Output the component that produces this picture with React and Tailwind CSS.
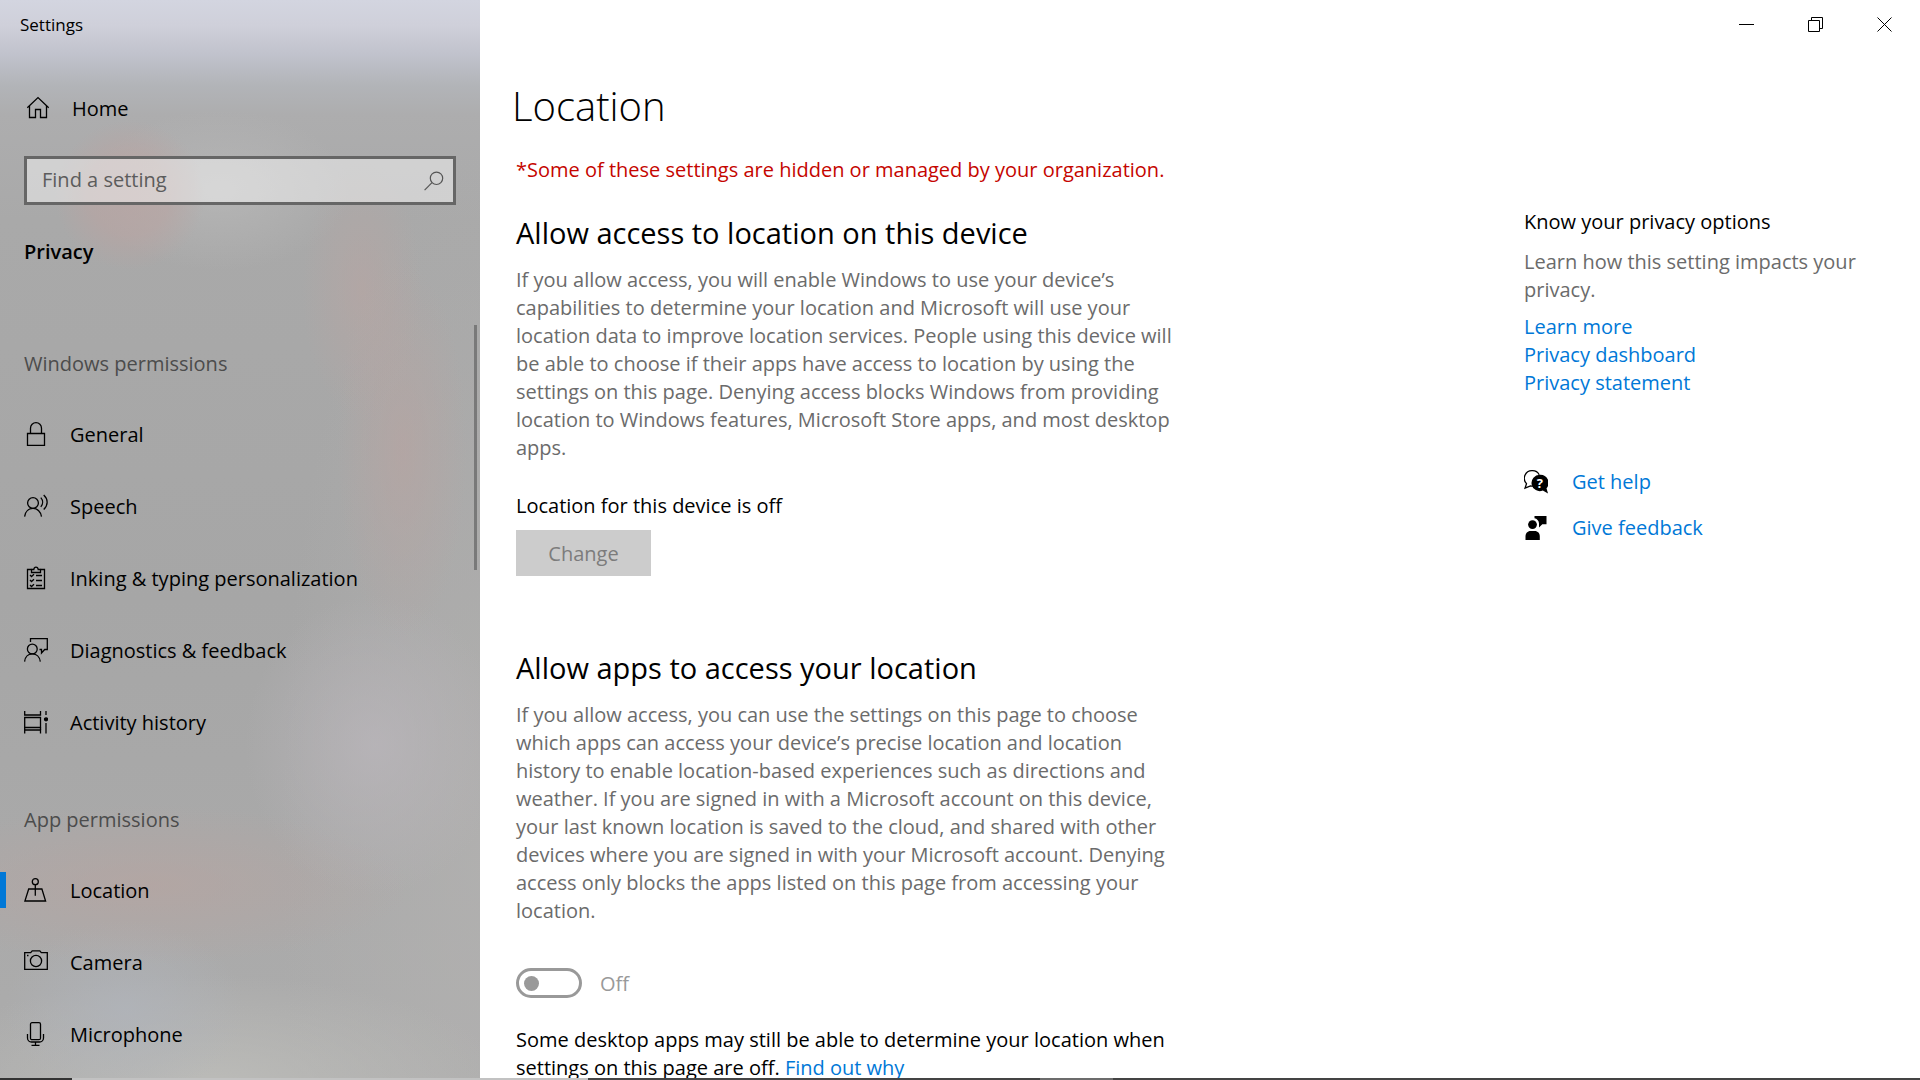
import React, { useState } from 'react';

const Icon = ({ children, className = '' }) => (
    <svg
        width="24"
        height="24"
        viewBox="0 0 24 24"
        fill="none"
        stroke="currentColor"
        strokeWidth="1.3"
        className={`shrink-0 ${className}`}
        aria-hidden="true"
    >
        {children}
    </svg>
);

const HomeIcon = () => (
    <Icon>
        <path d="M1.3 11.8 12 1.6l10.7 10.2" />
        <path d="M3.5 10v11.5h6v-8h5v8h6V10" />
    </Icon>
);

const LockIcon = () => (
    <Icon>
        <path d="M3.5 11.5h17v12h-17z" />
        <path d="M6.5 11.5V6.2a5.5 5.5 0 0 1 11 0v5.3" />
    </Icon>
);

const SpeechIcon = () => (
    <Icon>
        <circle cx="9" cy="9" r="5.4" />
        <path d="M.6 22.6c.6-4.9 4-8.2 8.4-8.2s7.9 3.3 8.5 8.2" />
        <path d="M16.8 3.6c2.4 2.7 2.4 6.6 0 9.3" />
        <path d="M19.7 1c4.6 4.2 4.6 10.3 0 14.5" />
    </Icon>
);

const ClipboardIcon = () => (
    <Icon>
        <path d="M7.5 3.5h-4v19h17v-19h-4" />
        <path d="M7.5 6.5v-3h2.3c.3-3.3 4.1-3.3 4.4 0h2.3v3z" />
        <path d="M12 9.5h6M12 14.5h6M12 19.500h6" />
        <path d="m6 9 1.500 1.500L10 8.200M6 14l1.500 1.500L10 13.200M6 19l1.500 1.500L10 18.200" />
    </Icon>
);

const DiagnosticsIcon = () => (
    <Icon>
        <circle cx="8.3" cy="11" r="4.9" />
        <path d="M.6 23.6c.5-4.6 3.6-7.7 7.7-7.7s7.4 3.1 8 7.7" />
        <path d="M6.5 4V.7h16.800v10.800h-2.600L17.500 15v-3.500h-2" />
    </Icon>
);

const HistoryIcon = () => (
    <Icon>
        <path d="M.7 1v4h15.800V1M.7 7.500h15.800v10H.7zM.7 23.500V20h15.800v3.500" />
        <path d="M.7 17.500V20M16.500 17.500V20M22 1v4M22 13v10.500" />
        <circle cx="22" cy="9.300" r="1.500" fill="currentColor" />
    </Icon>
);

const LocationIcon = () => (
    <Icon>
        <circle cx="11.3" cy="3.7" r="3" />
        <path d="M11.300 6.700v11" />
        <path d="M4.700 11h13.200l3.700 12H.9z" />
    </Icon>
);

const CameraIcon = () => (
    <Icon>
        <path d="M.7 2.600h6l1.500-1.700h7.600l1.500 1.700h6v16.800H.7z" />
        <circle cx="12" cy="11" r="5.600" />
        <path d="M3 5.500h1.500" />
    </Icon>
);

const MicrophoneIcon = () => (
    <Icon>
        <rect x="6.500" y=".7" width="10" height="17" rx="1.500" />
        <path d="M3.500 12v4a4 4 0 0 0 4 4h8a4 4 0 0 0 4-4v-4M11.500 20v3.300M7.500 23.400h8" />
    </Icon>
);

const HelpIcon = () => (
    <Icon>
        <path d="M8 .7a7.600 7.600 0 0 0-5.500 12.900L1 18.200l5.500-2.300a8 8 0 0 0 2.500.1M15.200 4.800A7.600 7.600 0 0 0 8 .7" />
        <path d="M15.800 4.700a8.200 8.200 0 1 0 3 15.800l5.200 3-1.500-5.200a8.200 8.200 0 0 0-6.700-13.600z" fill="currentColor" stroke="none" />
        <text x="15.800" y="18" textAnchor="middle" fontSize="13" fontWeight="700" fill="#fff" stroke="none">?</text>
    </Icon>
);

const FeedbackIcon = () => (
    <Icon>
        <g fill="currentColor" stroke="none">
            <circle cx="8.500" cy="8.600" r="4.400" />
            <path d="M1.500 24v-3.500c0-3.200 2-5.500 5-5.500h4.300c3 0 5 2.300 5 5.500V24z" />
            <path d="M10.500 0h12v8.200h-4.200L15 11.500V7.200c-.3-2.600-2-4.400-4.500-4.900z" />
        </g>
    </Icon>
);

const windowsPermissions = [
    { name: 'General', icon: LockIcon },
    { name: 'Speech', icon: SpeechIcon },
    { name: 'Inking & typing personalization', icon: ClipboardIcon },
    { name: 'Diagnostics & feedback', icon: DiagnosticsIcon },
    { name: 'Activity history', icon: HistoryIcon }
];

const appPermissions = [
    { name: 'Location', icon: LocationIcon },
    { name: 'Camera', icon: CameraIcon },
    { name: 'Microphone', icon: MicrophoneIcon }
];

const NavGroup = ({ title, items, active, onSelect }) => (
    <section>
        <h2 className="px-6 text-[#4c4c4c]">{title}</h2>
        <ul className="mt-5">
            {items.map(({ name, icon: ItemIcon }) => (
                <li key={name}>
                    <button
                        type="button"
                        onClick={() => onSelect(name)}
                        className="flex h-18 w-full items-center text-left hover:bg-black/5"
                    >
                        <span className={`h-9 w-[6px] ${active === name ? 'bg-[#0078d7]' : ''}`} />
                        <span className="flex items-center gap-[22px] pl-[18px]">
                            <ItemIcon />
                            <span className="pt-0.5">{name}</span>
                        </span>
                    </button>
                </li>
            ))}
        </ul>
    </section>
);

const Sidebar = () => {
    const [active, setActive] = useState('Location');

    return (
        <aside className="relative w-1/4 shrink-0 overflow-hidden bg-[#a7a7a7] bg-[radial-gradient(circle_at_130px_195px,#b9a4a2bb_0,#b9a4a299_40px,#b9a4a200_75px),radial-gradient(ellipse_130px_80px_at_220px_190px,#b8b8b8cc,#b8b8b800),radial-gradient(ellipse_60px_130px_at_362px_290px,#b8a5a299,#b8a5a200),radial-gradient(ellipse_65px_190px_at_402px_450px,#b8a3a099,#b8a3a000),radial-gradient(ellipse_130px_150px_at_375px_745px,#bab6bbbb,#bab6bb00),radial-gradient(ellipse_260px_80px_at_150px_885px,#b7a4a0aa,#b7a4a000),radial-gradient(ellipse_120px_90px_at_125px_1010px,#b0b4bbbb,#b0b4bb00),radial-gradient(ellipse_300px_110px_at_210px_1085px,#bfbfbbcc,#bfbfbb00),radial-gradient(ellipse_200px_700px_at_100%_850px,#b2b1b0cc,#b2b1b000),linear-gradient(#d3d5e0_0,#cfd0da_25px,#c0c2cc_55px,#b2b4b8_85px,#adadae_115px,#a9a9a9_220px,#a6a6a6_600px,#acacac_100%)]">
            <header className="flex h-12 items-center px-5 pt-0.5 text-[17px]">Settings</header>

            <a href="#home" className="mt-6 flex h-18 items-center gap-[22px] px-[26px]">
                <HomeIcon />
                <span className="pt-0.5">Home</span>
            </a>

            <div className="relative mx-6 mt-3">
                <input
                    type="text"
                    aria-label="Find a setting"
                    placeholder="Find a setting"
                    className="block h-[49px] w-full border-3 border-[#666] bg-white/45 pr-12 pb-0.5 pl-[15px] outline-none placeholder:text-[#5c5c5c]"
                />
                <svg
                    width="20"
                    height="20"
                    viewBox="0 0 20 20"
                    fill="none"
                    stroke="#555"
                    strokeWidth="1.2"
                    className="absolute top-[15px] right-3"
                    aria-hidden="true"
                >
                    <circle cx="12.5" cy="7.3" r="6.2" />
                    <path d="M8 11.7.6 19.2" />
                </svg>
            </div>

            <h1 className="mt-[33px] px-6 font-semibold">Privacy</h1>

            <nav className="mt-[84px] flex flex-col gap-12">
                <NavGroup title="Windows permissions" items={windowsPermissions} active={active} onSelect={setActive} />
                <NavGroup title="App permissions" items={appPermissions} active={active} onSelect={setActive} />
            </nav>

            {/* Scroll thumb */}
            <div className="absolute top-[325px] right-[3px] h-[245px] w-[3px] bg-[#797979]" />
        </aside>
    );
};

const WindowControls = () => (
    <div className="flex h-12 justify-end pr-px">
        <button type="button" aria-label="Minimize" className="flex w-[69px] items-center justify-center hover:bg-gray-200">
            <svg width="15" height="15" viewBox="0 0 15 15" stroke="#000" aria-hidden="true">
                <path d="M0 7.5h15" />
            </svg>
        </button>
        <button type="button" aria-label="Restore" className="flex w-[69px] items-center justify-center hover:bg-gray-200">
            <svg width="15" height="15" viewBox="0 0 15 15" fill="none" stroke="#000" aria-hidden="true">
                <path d="M.5 3.5h11v11H.5zM3.5 3.5v-3h11v11h-3" />
            </svg>
        </button>
        <button type="button" aria-label="Close" className="flex w-[69px] items-center justify-center hover:bg-red-600">
            <svg width="15" height="15" viewBox="0 0 15 15" stroke="#000" aria-hidden="true">
                <path d="m.5.5 14 14M14.5.5l-14 14" />
            </svg>
        </button>
    </div>
);

const PrivacyOptions = () => (
    <aside className="w-[360px] shrink-0 pt-[74px]">
        <h2>Know your privacy options</h2>
        <p className="mt-3 text-[#6b6b6b]">Learn how this setting impacts your privacy.</p>
        <ul className="mt-[9px] text-[#0078d7]">
            <li><a href="#learn-more">Learn more</a></li>
            <li><a href="#dashboard">Privacy dashboard</a></li>
            <li><a href="#statement">Privacy statement</a></li>
        </ul>
        <div className="mt-[71px] flex flex-col gap-[18px]">
            <div className="flex items-center gap-6">
                <HelpIcon />
                <a href="#help" className="text-[#0078d7]">Get help</a>
            </div>
            <div className="flex items-center gap-6">
                <FeedbackIcon />
                <a href="#feedback" className="text-[#0078d7]">Give feedback</a>
            </div>
        </div>
    </aside>
);

const App = () => {
    const [appAccess, setAppAccess] = useState(false);

    return (
        <div className="flex h-screen flex-col overflow-hidden bg-white font-['Open_Sans',sans-serif] text-[20px] leading-[28px] text-black">
            <div className="flex min-h-0 flex-1">
                <Sidebar />

                <main className="min-w-0 flex-1 overflow-hidden">
                    <WindowControls />
                    <h1 className="mt-[30px] pl-8 text-[40px] leading-[56px] font-light">Location</h1>

                    <div className="flex justify-between pr-9 pl-9">
                        <div className="w-[660px] pt-[22px]">
                            <p className="text-[#c50500]">*Some of these settings are hidden or managed by your organization.</p>

                            <section className="mt-[31px]">
                                <h2 className="text-[29px] leading-[36px]">Allow access to location on this device</h2>
                                <p className="mt-[15px] text-[#6b6b6b]">
                                    If you allow access, you will enable Windows to use your device’s capabilities to
                                    determine your location and Microsoft will use your location data to improve location
                                    services. People using this device will be able to choose if their apps have access to
                                    location by using the settings on this page. Denying access blocks Windows from
                                    providing location to Windows features, Microsoft Store apps, and most desktop apps.
                                </p>
                                <p className="mt-[30px]">Location for this device is off</p>
                                <button type="button" disabled className="mt-[10px] h-[46px] w-[135px] bg-[#ccc] pt-0.5 text-[#7c7c7c]">
                                    Change
                                </button>
                            </section>

                            <section className="mt-[74px]">
                                <h2 className="text-[29px] leading-[36px]">Allow apps to access your location</h2>
                                <p className="mt-[15px] text-[#6b6b6b]">
                                    If you allow access, you can use the settings on this page to choose which apps can
                                    access your device’s precise location and location history to enable location-based
                                    experiences such as directions and weather. If you are signed in with a Microsoft
                                    account on this device, your last known location is saved to the cloud, and shared with
                                    other devices where you are signed in with your Microsoft account. Denying access only
                                    blocks the apps listed on this page from accessing your location.
                                </p>
                                <label className="mt-[43px] flex items-center gap-[18px] text-[#999]">
                                    <input
                                        type="checkbox"
                                        role="switch"
                                        disabled
                                        checked={appAccess}
                                        onChange={(e) => setAppAccess(e.target.checked)}
                                        className="flex h-[30px] w-[66px] appearance-none items-center rounded-full border-3 border-[#999] pl-[5px] before:size-[15px] before:rounded-full before:bg-[#999]"
                                    />
                                    <span className="pt-0.5">Off</span>
                                </label>
                                <p className="mt-[28px]">
                                    Some desktop apps may still be able to determine your location when settings on this
                                    page are off. <a href="#find-out-why" className="text-[#0078d7]">Find out why</a>
                                </p>
                            </section>
                        </div>

                        <PrivacyOptions />
                    </div>
                </main>
            </div>

            {/* Top edge of the taskbar */}
            <footer className="flex h-[2px] shrink-0 bg-[#444]">
                <div className="w-[72px] bg-[#333]" />
                <div className="w-[516px] bg-[#c2c2c2]" />
                <div className="ml-[452px] w-[73px] bg-[#6c6c6c]" />
            </footer>
        </div>
    );
};

export default App;
